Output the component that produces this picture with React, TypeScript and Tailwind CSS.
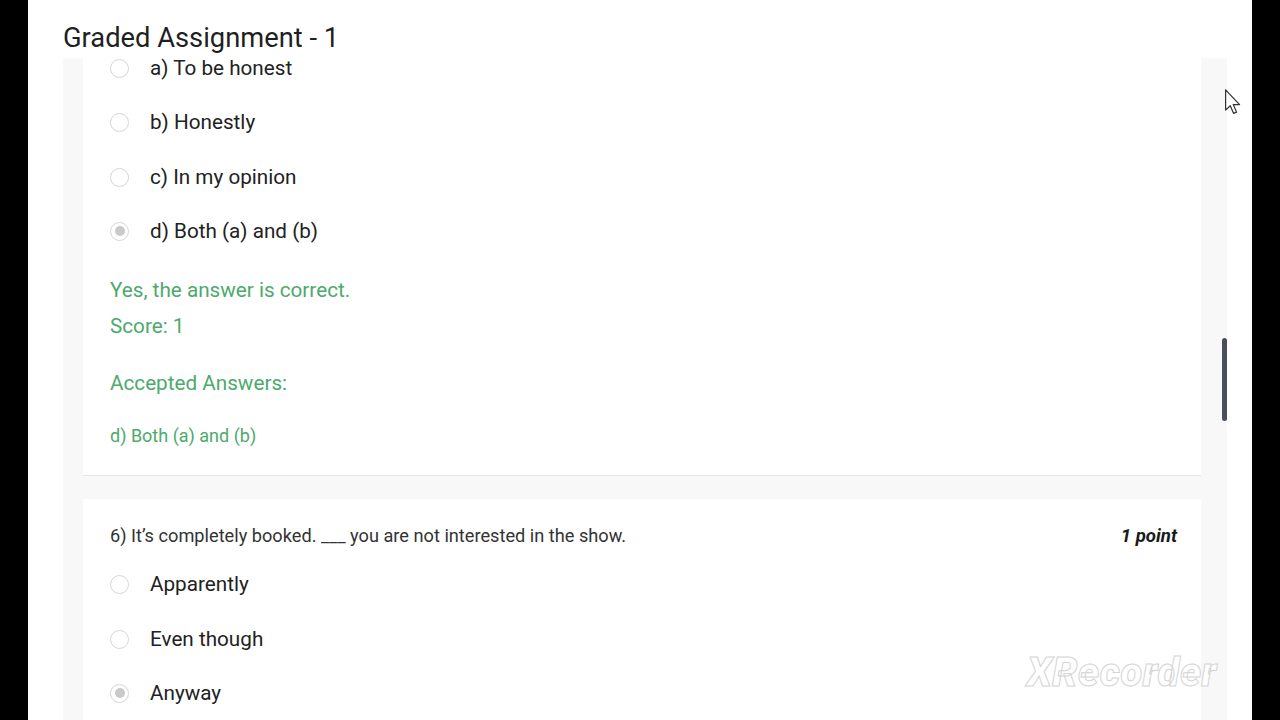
import React from "react";

const font = { fontFamily: "Roboto, 'Noto Sans', sans-serif" };

function Radio({ checked }: { checked?: boolean }) {
  return (
    <span className="flex h-[19px] w-[19px] shrink-0 items-center justify-center rounded-full border-[1.5px] border-[#d6d6d6] bg-white">
      {checked ? <span className="h-[10px] w-[10px] rounded-full bg-[#c9c9c9]" /> : null}
    </span>
  );
}

function Option({ label, checked, first }: { label: string; checked?: boolean; first?: boolean }) {
  return (
    <div
      className={
        first
          ? "mb-[16.7px] flex h-[21px] items-center gap-[21px] pl-[27px]"
          : "flex h-[54.3px] items-center gap-[21px] pl-[27px]"
      }
    >
      <Radio checked={checked} />
      <span className="text-[20.7px] leading-[20.7px] text-[#222222]">{label}</span>
    </div>
  );
}

export default function App() {
  return (
    <div className="relative flex h-[720px] w-[1280px] overflow-hidden bg-black" style={font}>
      <div className="w-[28px] shrink-0 bg-black" />
      <div className="flex w-[1224px] shrink-0 flex-col bg-white">
        <div className="h-[58px] shrink-0 pl-[35px] pt-[23px]">
          <h1 className="text-[27.3px] font-normal leading-[30px] text-[#1f1f1f]">Graded Assignment - 1</h1>
        </div>
        <div className="flex min-h-0 flex-1">
          <div className="w-[35px] shrink-0 bg-white" />
          <div className="flex min-h-0 w-[1164px] shrink-0 flex-col gap-[23px] bg-[#f8f8f9] pl-[20px] pr-[26px]">
            <div className="shrink-0 border-b border-[#e6e6e6] bg-white pb-[27px]">
              <Option label="a) To be honest" first />
              <Option label="b) Honestly" />
              <Option label="c) In my opinion" />
              <Option label="d) Both (a) and (b)" checked />
              <div className="mt-[13px] pl-[27px] text-[#4caa6c]">
                <p className="text-[20.7px] leading-[36px]">Yes, the answer is correct.</p>
                <p className="text-[20.7px] leading-[36px]">Score: 1</p>
                <p className="mt-[21px] text-[20.7px] leading-[36px]">Accepted Answers:</p>
                <p className="mt-[23px] text-[18px] leading-[24px]">d) Both (a) and (b)</p>
              </div>
            </div>
            <div className="shrink-0 bg-white pt-[25px] pb-[20px]">
              <div className="flex items-center justify-between pl-[27px] pr-[24px]">
                <p className="text-[18.2px] leading-[24px] text-[#333333]">
                  6) It’s completely booked. ___ you are not interested in the show.
                </p>
                <span className="text-[18.6px] font-bold italic leading-[24px] text-[#1a1a1a]">1 point</span>
              </div>
              <div className="mt-[10px]">
                <Option label="Apparently" />
                <Option label="Even though" />
                <Option label="Anyway" checked />
              </div>
            </div>
          </div>
          <div className="w-[25px] shrink-0 bg-white" />
        </div>
      </div>
      <div className="w-[28px] shrink-0 bg-black" />

      {/* scrollbar thumb */}
      <div className="absolute left-[1222px] top-[338px] h-[83px] w-[5px] rounded-full bg-[#4a4f5e]" />

      {/* mouse cursor */}
      <svg className="absolute left-[1224px] top-[89px]" width="18" height="26" viewBox="0 0 12 19">
        <path
          d="M0.6 0.6 L0.6 15.4 L4 12.2 L6.4 17.8 L8.6 16.9 L6.2 11.4 L10.8 11.4 Z"
          fill="#ffffff"
          stroke="#333333"
          strokeWidth="0.9"
          strokeLinejoin="round"
        />
      </svg>

      {/* watermark */}
      <div className="absolute left-[1027px] top-[652px] text-[40px] font-black italic leading-[42px] tracking-[0.5px] text-white [-webkit-text-stroke:1px_#d4d4d4]">
        XRecorder
      </div>
    </div>
  );
}
